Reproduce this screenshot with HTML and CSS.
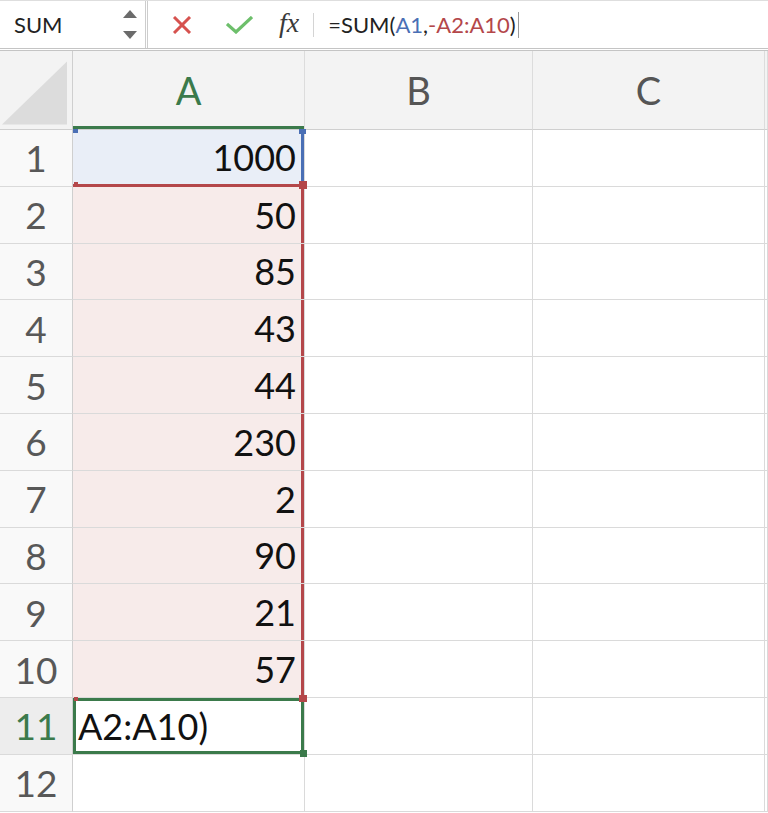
FILE: index.html
```html
<!DOCTYPE html>
<html lang="en">
<head>
    <meta charset="UTF-8">
    <meta name="viewport" content="width=device-width, initial-scale=1.0">
    <title>Sheet1</title>
    <link rel="stylesheet" href="styles.css">
</head>
<body>
    <div class="toolbar">
        <div class="name-box">
            <span class="name-text">SUM</span>
            <span class="spinner">
                <svg width="14" height="30" viewBox="0 0 14 30">
                    <polygon points="7,0 14,8 0,8" fill="#6b6b6b"/>
                    <polygon points="0,21 14,21 7,29" fill="#6b6b6b"/>
                </svg>
            </span>
        </div>
        <div class="formula-tools">
            <!-- cancel -->
            <svg class="tool-icon cancel" width="20" height="18" viewBox="0 0 20 18">
                <line x1="2" y1="1" x2="18" y2="17" stroke="#d6524f" stroke-width="3"/>
                <line x1="18" y1="1" x2="2" y2="17" stroke="#d6524f" stroke-width="3"/>
            </svg>
            <!-- enter -->
            <svg class="tool-icon enter" width="27" height="18" viewBox="0 0 27 18">
                <polyline points="1,8 10,16 26,1" fill="none" stroke="#6dbf6b" stroke-width="3.2"/>
            </svg>
            <span class="fx">fx</span>
            <span class="divider"></span>
        </div>
        <div class="formula-input">
            <span>=SUM(</span><span class="ref-blue">A1</span><span>,</span><span class="ref-red">-A2:A10</span><span>)</span><span class="caret"></span>
        </div>
    </div>

    <div class="sheet">
        <div class="row header-row">
            <div class="corner">
                <svg width="66" height="64" viewBox="0 0 66 64">
                    <polygon points="66,0 66,64 0,64" fill="#dcdcdc"/>
                </svg>
            </div>
            <div class="col-head active">A</div>
            <div class="col-head">B</div>
            <div class="col-head">C</div>
            <div class="col-head"></div>
        </div>

        <div class="row">
            <div class="row-head">1</div>
            <div class="cell num ref-a1">1000</div>
            <div class="cell"></div><div class="cell"></div><div class="cell"></div>
        </div>
        <div class="row">
            <div class="row-head">2</div>
            <div class="cell num ref-range range-top">50</div>
            <div class="cell"></div><div class="cell"></div><div class="cell"></div>
        </div>
        <div class="row">
            <div class="row-head">3</div>
            <div class="cell num ref-range">85</div>
            <div class="cell"></div><div class="cell"></div><div class="cell"></div>
        </div>
        <div class="row">
            <div class="row-head">4</div>
            <div class="cell num ref-range">43</div>
            <div class="cell"></div><div class="cell"></div><div class="cell"></div>
        </div>
        <div class="row">
            <div class="row-head">5</div>
            <div class="cell num ref-range">44</div>
            <div class="cell"></div><div class="cell"></div><div class="cell"></div>
        </div>
        <div class="row">
            <div class="row-head">6</div>
            <div class="cell num ref-range">230</div>
            <div class="cell"></div><div class="cell"></div><div class="cell"></div>
        </div>
        <div class="row">
            <div class="row-head">7</div>
            <div class="cell num ref-range">2</div>
            <div class="cell"></div><div class="cell"></div><div class="cell"></div>
        </div>
        <div class="row">
            <div class="row-head">8</div>
            <div class="cell num ref-range">90</div>
            <div class="cell"></div><div class="cell"></div><div class="cell"></div>
        </div>
        <div class="row">
            <div class="row-head">9</div>
            <div class="cell num ref-range">21</div>
            <div class="cell"></div><div class="cell"></div><div class="cell"></div>
        </div>
        <div class="row">
            <div class="row-head">10</div>
            <div class="cell num ref-range range-bottom">57</div>
            <div class="cell"></div><div class="cell"></div><div class="cell"></div>
        </div>
        <div class="row">
            <div class="row-head active">11</div>
            <div class="cell editing">A2:A10)</div>
            <div class="cell"></div><div class="cell"></div><div class="cell"></div>
        </div>
        <div class="row">
            <div class="row-head">12</div>
            <div class="cell"></div>
            <div class="cell"></div><div class="cell"></div><div class="cell"></div>
        </div>
    </div>
</body>
</html>
```

FILE: styles.css
```css
:root {
    --grid-line: #dadada;
    --head-bg: #f3f3f3;
    --green: #3b7a4b;
    --red: #b4474a;
    --blue: #4a6fb5;
}

* {
    box-sizing: border-box;
}

body {
    margin: 0;
    font-family: Lato, "Open Sans", Arial, sans-serif;
    background: #ffffff;
    color: #111111;
    overflow: hidden;
}

/* formula bar */
.toolbar {
    display: flex;
    align-items: center;
    height: 51px;
    border-top: 1px solid #dedede;
    border-bottom: 3px double #c4c4c4;
}

.name-box {
    display: flex;
    align-items: center;
    width: 148px;
    height: 100%;
    padding: 0 8px 0 14px;
    border-right: 3px double #cdcdcd;
}

.name-text {
    font-size: 22px;
    color: #222;
}

.spinner {
    margin-left: auto;
    display: flex;
}

.formula-tools {
    display: flex;
    align-items: center;
    height: 100%;
    padding-left: 24px;
}

.tool-icon.enter {
    margin-left: 34px;
}

.fx {
    margin-left: 26px;
    font-family: "Liberation Serif", "DejaVu Serif", serif;
    font-style: italic;
    font-size: 28px;
    color: #3a3a3a;
    line-height: 1;
    margin-top: -4px;
}

.divider {
    width: 1px;
    height: 24px;
    margin-left: 14px;
    background: #d4d4d4;
}

.formula-input {
    display: flex;
    align-items: center;
    padding-left: 14px;
    font-size: 22px;
    color: #222;
}

.ref-blue {
    color: var(--blue);
}

.ref-red {
    color: var(--red);
}

.caret {
    width: 1px;
    height: 26px;
    margin-left: 2px;
    background: #9a9a9a;
}

/* grid */
.sheet {
    display: flex;
    flex-direction: column;
}

.row {
    display: grid;
    grid-template-columns: 73px 232px 228px 232px 1fr;
    height: 56.8px;
}

.header-row {
    height: 79px;
}

.corner {
    display: flex;
    align-items: flex-end;
    padding: 0 5px 4px 2px;
    background: var(--head-bg);
    border-right: 1px solid #cfcfcf;
    border-bottom: 1px solid #cfcfcf;
}

.col-head {
    display: flex;
    align-items: center;
    justify-content: center;
    background: var(--head-bg);
    border-right: 1px solid #dcdcdc;
    border-bottom: 1px solid #cfcfcf;
    font-size: 38px;
    color: #555555;
}

.col-head.active {
    color: var(--green);
    box-shadow: inset 0 -3px 0 var(--green);
}

.row-head {
    display: flex;
    align-items: center;
    justify-content: center;
    background: #f9f9f9;
    border-right: 1px solid #cfcfcf;
    border-bottom: 1px solid var(--grid-line);
    font-size: 37px;
    color: #585858;
}

.row-head.active {
    background: #ededed;
    color: var(--green);
}

.cell {
    position: relative;
    display: flex;
    align-items: center;
    border-right: 1px solid var(--grid-line);
    border-bottom: 1px solid var(--grid-line);
    font-size: 36px;
    color: #111111;
}

.cell.num {
    justify-content: flex-end;
    padding-right: 8px;
}

/* A1 reference */
.ref-a1 {
    background: #e9eef7;
    box-shadow: inset -3px 0 0 var(--blue);
    border-bottom: 3px solid var(--red);
}

.ref-a1::before,
.ref-a1::after {
    content: "";
    position: absolute;
    top: -1px;
    width: 5px;
    height: 4px;
    background: var(--blue);
    z-index: 2;
}

.ref-a1::before {
    left: 0;
}

.ref-a1::after {
    right: -2px;
    width: 7px;
    height: 5px;
}

/* A2:A10 reference */
.ref-range {
    background: #f7ebea;
    box-shadow: inset -3px 0 0 var(--red);
}

.range-top::before,
.range-top::after {
    content: "";
    position: absolute;
    background: var(--red);
    z-index: 2;
}

.range-top::before {
    top: -5px;
    left: 1px;
    width: 4px;
    height: 5px;
}

.range-top::after {
    top: -6px;
    right: -3px;
    width: 8px;
    height: 8px;
}

.range-bottom::before,
.range-bottom::after {
    content: "";
    position: absolute;
    background: var(--red);
    z-index: 2;
}

.range-bottom::before {
    bottom: -4px;
    left: 1px;
    width: 4px;
    height: 4px;
}

.range-bottom::after {
    bottom: -5px;
    right: -3px;
    width: 8px;
    height: 7px;
}

/* cell being edited */
.editing {
    padding-left: 5px;
    box-shadow: inset 0 0 0 3px var(--green);
}

.editing::after {
    content: "";
    position: absolute;
    bottom: -3px;
    right: -3px;
    width: 7px;
    height: 7px;
    background: var(--green);
    z-index: 2;
}
```
